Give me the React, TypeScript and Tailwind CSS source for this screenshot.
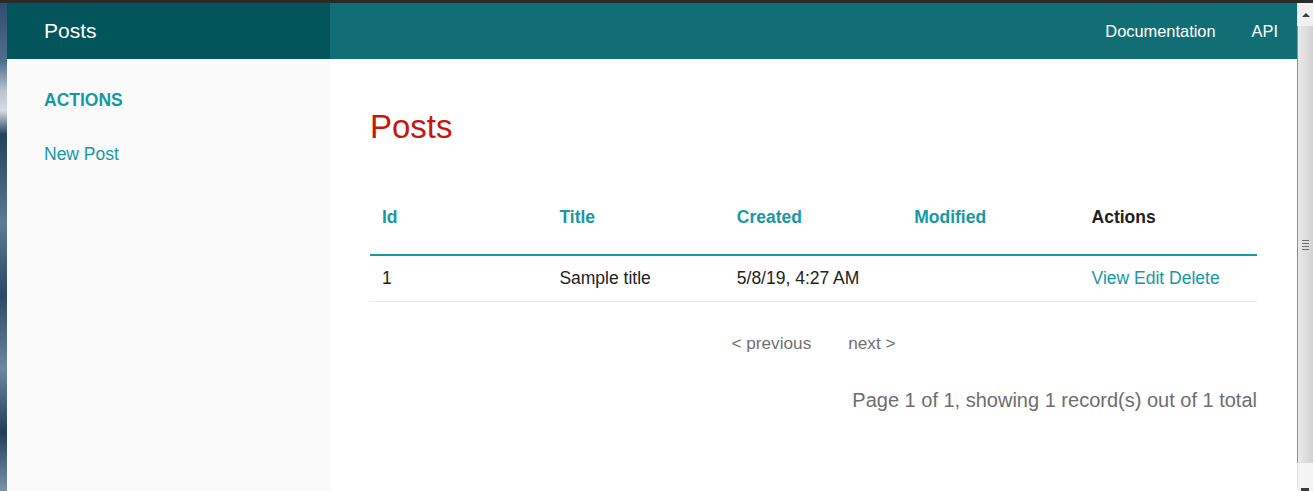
import React from 'react';

const font = { fontFamily: '"Liberation Sans", Arial, sans-serif' };

const posts = [{ id: 1, title: 'Sample title', created: '5/8/19, 4:27 AM', modified: '' }];

const columns = ['Id', 'Title', 'Created', 'Modified'];

const Scrollbar: React.FC = () => (
  <div className="flex w-[16px] flex-col bg-[#f0f0f0]">
    <div className="flex h-[23px] items-center justify-center border-l border-[#e3e3e3]">
      <div className="h-0 w-0 border-x-[4px] border-b-[4px] border-x-transparent border-b-[#3c3c3c]" />
    </div>
    <div className="flex h-[437px] items-center justify-center border-l border-[#8f8f8f] bg-[linear-gradient(to_right,#e9e9e9,#dcdcdc_60%,#d2d2d2)]">
      <div className="flex w-[7px] flex-col gap-[2px]">
        <div className="h-px bg-[#6e6e6e]" />
        <div className="h-px bg-[#6e6e6e]" />
        <div className="h-px bg-[#6e6e6e]" />
        <div className="h-px bg-[#6e6e6e]" />
      </div>
    </div>
    <div className="flex-1 border-l border-[#e3e3e3] bg-[#f4f4f4]" />
    <div className="flex h-[3px] justify-center bg-[#f0f0f0]">
      <div className="h-[3px] w-[8px] bg-[#3c3c3c]" />
    </div>
  </div>
);

export default function App() {
  return (
    <div className="flex h-[491px] w-[1313px] flex-col overflow-hidden bg-white" style={font}>
      <div className="h-[3px] bg-[#2b2b2b]" />
      <div className="flex min-h-0 flex-1">
        <div className="w-[7px] bg-[linear-gradient(to_bottom,#2f4d6e_0%,#506f8f_12%,#b7c4d1_18%,#d6dde4_22%,#22415f_27%,#5d7a97_45%,#2a4867_60%,#6e87a0_75%,#213d5b_88%,#7a93ab_100%)]" />

        <div className="flex min-w-0 flex-1 flex-col">
          {/* top bar */}
          <div className="flex h-[56px] items-center bg-[#126e75]">
            <div className="flex h-full w-[323px] items-center bg-[#02555b] pl-[37px] text-[21px] text-white">
              Posts
            </div>
            <div className="ml-auto flex items-center gap-[36px] pr-[19px] text-[16.4px] text-white">
              <a>Documentation</a>
              <a>API</a>
            </div>
          </div>

          <div className="flex min-h-0 flex-1">
            {/* sidebar */}
            <div className="w-[323px] bg-[#fafafa] pl-[37px] pt-[29px]">
              <div className="text-[17.5px] font-bold uppercase leading-[24px] text-[#1798a5]">Actions</div>
              <div className="mt-[30px] text-[17.5px] leading-[24px] text-[#1798a5]">New Post</div>
            </div>

            {/* content */}
            <div className="flex-1 px-10 pt-[48px]">
              <h3 className="text-[33px] leading-[40px] text-[#c8160f]">Posts</h3>
              <table className="mt-[34px] w-full table-fixed border-collapse text-[17.5px] text-[#222]">
                <thead>
                  <tr className="h-[74px] border-b-2 border-[#1798a5]">
                    {columns.map((c) => (
                      <th key={c} className="px-3 text-left font-bold text-[#1798a5]">
                        {c}
                      </th>
                    ))}
                    <th className="px-3 text-left font-bold text-[#222]">Actions</th>
                  </tr>
                </thead>
                <tbody>
                  {posts.map((p) => (
                    <tr key={p.id} className="h-[46px] border-b border-[#e8e8e8]">
                      <td className="px-3">{p.id}</td>
                      <td className="px-3">{p.title}</td>
                      <td className="px-3">{p.created}</td>
                      <td className="px-3">{p.modified}</td>
                      <td className="px-3 text-[#1798a5]">
                        <a>View</a> <a>Edit</a> <a>Delete</a>
                      </td>
                    </tr>
                  ))}
                </tbody>
              </table>

              <div className="mt-[29px] flex justify-center gap-[37px] text-[17.2px] leading-[24px] text-[#707070]">
                <a>&lt; previous</a>
                <a>next &gt;</a>
              </div>
              <p className="mt-[33px] text-right text-[20px] leading-[24px] text-[#6e6e6e]">
                Page 1 of 1, showing 1 record(s) out of 1 total
              </p>
            </div>
          </div>
        </div>

        <Scrollbar />
      </div>
    </div>
  );
}
